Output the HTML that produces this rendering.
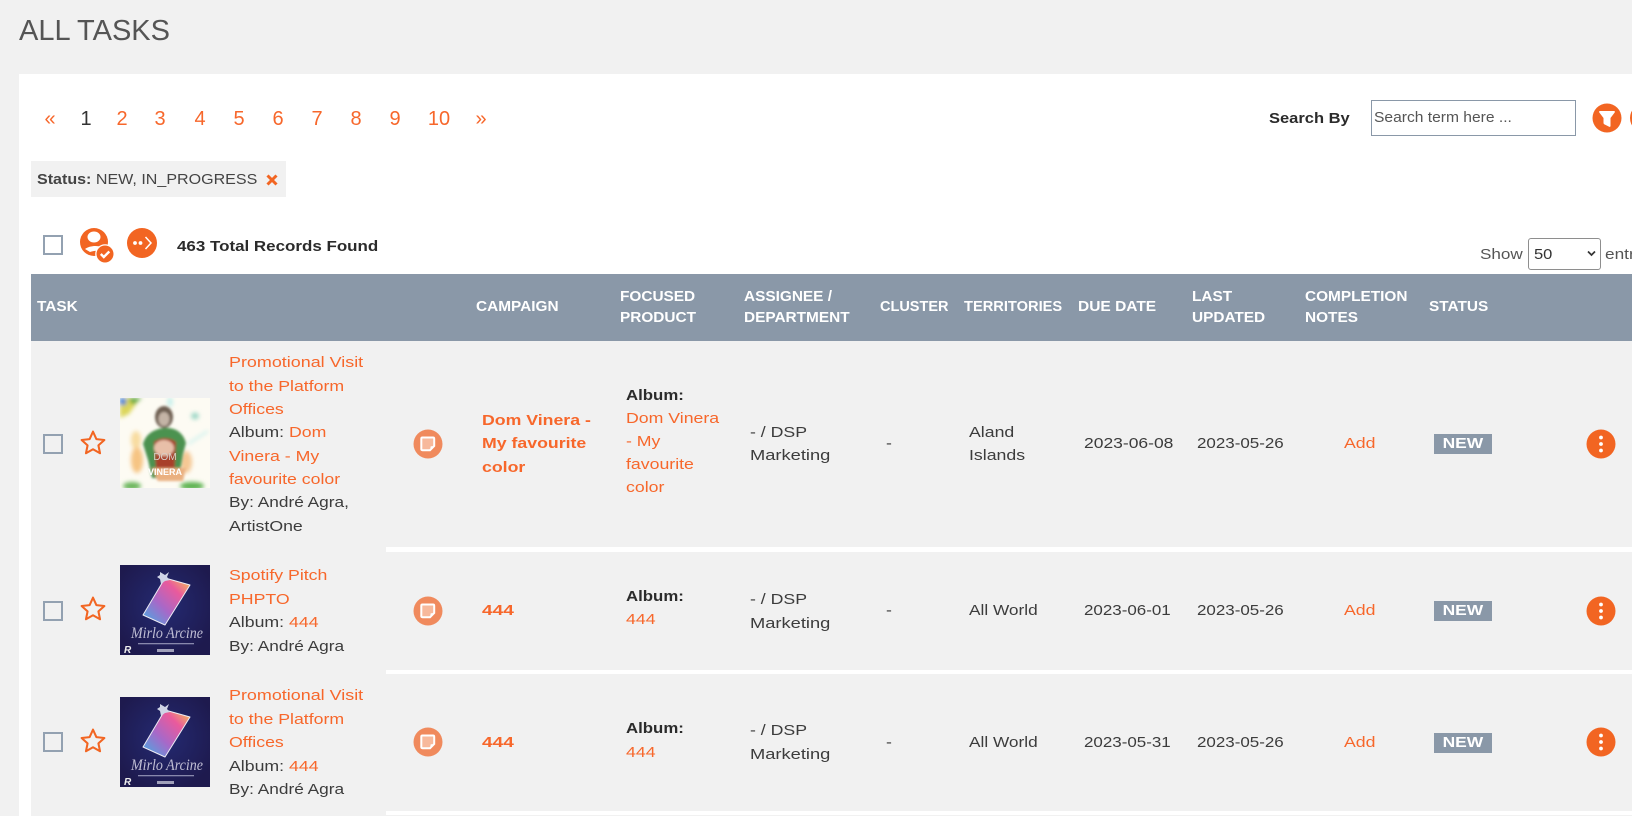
<!DOCTYPE html>
<html lang="en"><head><meta charset="utf-8"><title>All Tasks</title>
<style>
html,body{margin:0;padding:0;width:1632px;height:816px;overflow:hidden;background:#f1f1f1}
body{position:relative;font-family:"Liberation Sans",sans-serif;color:#3c3c3c}
.b{position:absolute}
.t{position:absolute;white-space:nowrap;height:20px;line-height:20px;font-size:15px;margin-top:1px;transform-origin:0 50%;transform:scaleX(1.18);color:#3c3c3c}
.o,.o a{color:#f7672b}
a{color:#f7672b;text-decoration:none}
.h{position:absolute;white-space:nowrap;height:20px;line-height:20px;font-size:14.5px;font-weight:bold;color:#fff;transform-origin:0 50%;transform:scaleX(1.06)}
.p{position:absolute;height:24px;line-height:24px;font-size:20px;width:40px;text-align:center;color:#f7672b;top:107px}
.bd{font-weight:bold}
.cb{position:absolute;width:16px;height:16px;border:2.5px solid #93a1b1;left:43px;background:transparent}
.new{position:absolute;left:1434px;width:58px;height:20px;background:#8a98a8;color:#fff;font-weight:bold;font-size:14.5px;line-height:20px;text-align:center}
.new span{display:inline-block;transform:scaleX(1.2)}
svg{position:absolute;display:block;overflow:visible}
</style></head><body>

<div class="t" style="left:19px;top:15px;height:30px;line-height:30px;font-size:29px;color:#555;transform:scaleX(1)">ALL TASKS</div>

<div class="b" style="left:19px;top:74px;width:1613px;height:742px;background:#fff"></div>

<!-- pagination -->
<div class="p" style="left:30px">«</div>
<div class="p" style="left:66px;color:#333">1</div>
<div class="p" style="left:102px">2</div>
<div class="p" style="left:140px">3</div>
<div class="p" style="left:180px">4</div>
<div class="p" style="left:219px">5</div>
<div class="p" style="left:258px">6</div>
<div class="p" style="left:297px">7</div>
<div class="p" style="left:336px">8</div>
<div class="p" style="left:375px">9</div>
<div class="p" style="left:419px">10</div>
<div class="p" style="left:461px">»</div>

<!-- search -->
<div class="t bd" style="left:1269px;top:108px;color:#2b2b2b;transform:scaleX(1.1)">Search By</div>
<div class="b" style="left:1371px;top:100px;width:203px;height:34px;border:1px solid #8a98a8;background:#fff"></div>
<div class="t" style="left:1374px;top:107px;color:#555;transform:scaleX(1.04)">Search term here ...</div>
<svg style="left:1592px;top:103px" width="30" height="30" viewBox="0 0 30 30"><circle cx="15" cy="15" r="14.500" fill="#f26522"/><path d="M8 8h14c.8 0 1.200.9.700 1.500L18.500 15v8c0 .7-.7 1.100-1.300.8l-4.500-2.300c-.7-.3-1.200-.9-1.200-1.600V15L7.300 9.500C6.800 8.900 7.200 8 8 8z" fill="#fff"/></svg>
<div class="b" style="left:1630px;top:103px;width:30px;height:30px;border-radius:50%;background:#f26522"></div>

<!-- chip -->
<div class="b" style="left:31px;top:161px;width:255px;height:36px;background:#f1f1f1"></div>
<div class="t" style="left:37px;top:168.500px;transform:scaleX(1.07);color:#444"><span class="bd">Status:</span> NEW, IN_PROGRESS</div>
<svg style="left:266px;top:174px" width="12" height="12" viewBox="0 0 12 12"><path d="M1.500 1.500L10.500 10.500M10.500 1.500L1.500 10.500" stroke="#f26522" stroke-width="3"/></svg>

<!-- toolbar -->
<div class="cb" style="top:235px"></div>
<svg style="left:79px;top:227px" width="38" height="38" viewBox="0 0 38 38">
<circle cx="15" cy="15" r="14" fill="#f26522"/>
<ellipse cx="15" cy="10" rx="6.500" ry="5.500" fill="#fff"/>
<path d="M6 22c4-3 11-4 17-2l-3 4c-3-.5-6 0-9 1z" fill="#fff"/>
<circle cx="26" cy="27" r="9.800" fill="#fff"/><circle cx="26" cy="27" r="8.500" fill="#f26522"/>
<path d="M21.800 27l3 3 5.500-5.500" fill="none" stroke="#fff" stroke-width="2.400"/>
</svg>
<svg style="left:127px;top:228px" width="30" height="30" viewBox="0 0 30 30"><circle cx="15" cy="15" r="15" fill="#f26522"/><circle cx="8" cy="15" r="1.900" fill="#fff"/><circle cx="13.500" cy="15" r="1.900" fill="#fff"/><path d="M18.500 9l5.500 6-5.500 6" fill="none" stroke="#fff" stroke-width="1.500"/></svg>
<div class="t bd" style="left:177px;top:236px;color:#2b2b2b;transform:scaleX(1.13)">463 Total Records Found</div>

<div class="t" style="left:1480px;top:244px;transform:scaleX(1.14);color:#555">Show</div>
<div class="b" style="left:1528px;top:238px;width:71px;height:30px;border:1px solid #8e8e8e;border-radius:3px;background:#fff"></div>
<div class="t" style="left:1534px;top:244px;color:#333;transform:scaleX(1.1)">50</div>
<svg style="left:1587px;top:250px" width="9" height="7" viewBox="0 0 9 7"><path d="M1 1.500l3.500 3.500L8 1.500" fill="none" stroke="#333" stroke-width="1.700"/></svg>
<div class="t" style="left:1605px;top:244px;color:#555;transform:scaleX(1.15)">entries</div>

<!-- table head -->
<div class="b" style="left:31px;top:274px;width:1601px;height:67px;background:#8a98a8"></div>
<div class="h" style="left:37px;top:297px">TASK</div>
<div class="h" style="left:476px;top:297px">CAMPAIGN</div>
<div class="h" style="left:620px;top:286.500px">FOCUSED</div>
<div class="h" style="left:620px;top:307.500px">PRODUCT</div>
<div class="h" style="left:744px;top:286.500px">ASSIGNEE /</div>
<div class="h" style="left:744px;top:307.500px">DEPARTMENT</div>
<div class="h" style="left:880px;top:297px;transform:scaleX(1)">CLUSTER</div>
<div class="h" style="left:964px;top:297px;transform:scaleX(1.01)">TERRITORIES</div>
<div class="h" style="left:1078px;top:297px;transform:scaleX(1.07)">DUE DATE</div>
<div class="h" style="left:1192px;top:286.500px">LAST</div>
<div class="h" style="left:1192px;top:307.500px">UPDATED</div>
<div class="h" style="left:1305px;top:286.500px">COMPLETION</div>
<div class="h" style="left:1305px;top:307.500px">NOTES</div>
<div class="h" style="left:1429px;top:297px">STATUS</div>

<!-- rows background -->
<div class="b" style="left:31px;top:341px;width:1601px;height:475px;background:#f1f1f1"></div>
<div class="b" style="left:386px;top:547px;width:1246px;height:4.500px;background:#fff"></div>
<div class="b" style="left:386px;top:669.500px;width:1246px;height:4.500px;background:#fff"></div>
<div class="b" style="left:386px;top:810.500px;width:1246px;height:4.500px;background:#fff"></div>

<!-- ROW 1 -->
<div class="cb" style="top:433.500px"></div>
<svg style="left:80px;top:430px" width="26" height="26" viewBox="1 1 24 24"><path d="M13 2.500l3.100 6.900 7.400.8-5.500 5 1.500 7.300-6.500-3.700-6.500 3.700 1.500-7.300-5.500-5 7.400-.8z" fill="none" stroke="#f26522" stroke-width="1.900" stroke-linejoin="round"/></svg>
<svg style="left:120px;top:398px" width="90" height="90" viewBox="0 0 90 90">
<defs><filter id="s1"><feGaussianBlur stdDeviation="2.200"/></filter><filter id="s2"><feGaussianBlur stdDeviation="1.300"/></filter><clipPath id="c1"><rect width="90" height="90"/></clipPath></defs>
<rect width="90" height="90" fill="#fdfbf3"/>
<g clip-path="url(#c1)">
<g filter="url(#s1)">
<path d="M0 0h20L9 16 0 20z" fill="#dcd65a"/><rect x="0" y="0" width="6" height="7" fill="#3a7ed8"/>
<path d="M8 0h14l-9 7z" fill="#5aa63c"/>
<ellipse cx="16" cy="42" rx="5" ry="9" fill="#f8dca0"/><ellipse cx="17" cy="62" rx="6" ry="13" fill="#f6c483"/>
<ellipse cx="50" cy="4" rx="3" ry="5" fill="#c8f0ec"/><ellipse cx="75" cy="18" rx="4" ry="3.500" fill="#9fd8c8"/><path d="M68 46L88 33" stroke="#d0f2ee" stroke-width="2.500"/>
<ellipse cx="12" cy="88" rx="9" ry="4" fill="#6ab65c"/><ellipse cx="72" cy="88" rx="12" ry="4" fill="#5cb250"/><ellipse cx="66" cy="64" rx="6" ry="11" fill="#f5c894"/>
</g>
<g filter="url(#s2)">
<path d="M23 46c3-11 12-15 21-16s19 3 22 15l-3 11-4 24H32l-4-18z" fill="#4c9250"/>
<path d="M34 44c6-5 16-5 22 0l-2 38H37z" fill="#a8412c"/>
<ellipse cx="44" cy="50" rx="10" ry="8" fill="#e8bfa8"/>
<ellipse cx="44" cy="19" rx="9" ry="11" fill="#6f6152"/>
<ellipse cx="44" cy="21" rx="5.500" ry="7" fill="#c4b4a6"/>
<path d="M32 70h34l-3 13H38z" fill="#eab080"/>
</g>
<text x="45" y="62" font-family="Liberation Sans,sans-serif" font-size="10" fill="#d8cfc8" text-anchor="middle">DOM</text>
<text x="45" y="77" font-family="Liberation Sans,sans-serif" font-size="9" font-weight="bold" fill="#fff" text-anchor="middle">VINERA</text>
</g></svg>
<div class="t o" style="left:229px;top:352px;transform:scaleX(1.195)">Promotional Visit</div>
<div class="t o" style="left:229px;top:376px">to the Platform</div>
<div class="t o" style="left:229px;top:399px">Offices</div>
<div class="t" style="left:229px;top:422px">Album: <a>Dom</a></div>
<div class="t o" style="left:229px;top:446px">Vinera - My</div>
<div class="t o" style="left:229px;top:469px">favourite color</div>
<div class="t" style="left:229px;top:492px;transform:scaleX(1.15)">By: André Agra,</div>
<div class="t" style="left:229px;top:516px">ArtistOne</div>
<svg style="left:413px;top:429px" width="30" height="30" viewBox="0 0 30 30"><circle cx="15" cy="15" r="14.500" fill="#f08a5d"/><path d="M9.500 8.500h10.500c.8 0 1.200.5 1.200 1.200V17l-4.200 4.200H9.500c-.7 0-1.200-.5-1.200-1.200V9.700c0-.7.500-1.200 1.200-1.200z" fill="#f7b99c" stroke="#fff" stroke-width="2"/><path d="M17.500 21.300V18c0-.5.300-.8.800-.8h3.200z" fill="#fff"/></svg>
<div class="t bd o" style="left:482px;top:409.500px">Dom Vinera -</div>
<div class="t bd o" style="left:482px;top:433px">My favourite</div>
<div class="t bd o" style="left:482px;top:457px">color</div>
<div class="t bd" style="left:626px;top:384.500px;color:#2b2b2b;transform:scaleX(1.12)">Album:</div>
<div class="t o" style="left:626px;top:407.500px">Dom Vinera</div>
<div class="t o" style="left:626px;top:431px">- My</div>
<div class="t o" style="left:626px;top:454px">favourite</div>
<div class="t o" style="left:626px;top:477px">color</div>
<div class="t" style="left:750px;top:422px">- / DSP</div>
<div class="t" style="left:750px;top:445px;transform:scaleX(1.22)">Marketing</div>
<div class="t" style="left:886px;top:433px">-</div>
<div class="t" style="left:969px;top:422px">Aland</div>
<div class="t" style="left:969px;top:445px">Islands</div>
<div class="t" style="left:1084px;top:433px;transform:scaleX(1.165)">2023-06-08</div>
<div class="t" style="left:1197px;top:433px;transform:scaleX(1.13)">2023-05-26</div>
<div class="t o" style="left:1344px;top:433px">Add</div>
<div class="new" style="top:434px"><span>NEW</span></div>
<svg style="left:1586px;top:429px" width="30" height="30" viewBox="0 0 30 30"><circle cx="15" cy="15" r="14.500" fill="#f26522"/><circle cx="15" cy="8.500" r="1.900" fill="#fff"/><circle cx="15" cy="15" r="1.900" fill="#fff"/><circle cx="15" cy="21.500" r="1.900" fill="#fff"/></svg>

<!-- ROW 2 -->
<div class="cb" style="top:600.500px"></div>
<svg style="left:80px;top:596px" width="26" height="26" viewBox="1 1 24 24"><path d="M13 2.500l3.100 6.900 7.400.8-5.500 5 1.500 7.300-6.500-3.700-6.500 3.700 1.500-7.300-5.500-5 7.400-.8z" fill="none" stroke="#f26522" stroke-width="1.900" stroke-linejoin="round"/></svg>
<svg style="left:120px;top:565px" width="90" height="90" viewBox="0 0 90 90">
<defs><radialGradient id="n1" cx="50%" cy="45%" r="60%"><stop offset="0" stop-color="#242a72"/><stop offset="1" stop-color="#1e1a4e"/></radialGradient><linearGradient id="p1" x1="0" y1="1" x2="1" y2="0"><stop offset="0" stop-color="#3fb0e4"/><stop offset=".4" stop-color="#a868c8"/><stop offset=".72" stop-color="#ea5a9c"/><stop offset="1" stop-color="#f4cc50"/></linearGradient></defs>
<rect width="90" height="90" fill="url(#n1)"/>
<path d="M45 13L70 20 45 60 23 50z" fill="url(#p1)" stroke="#eeecf4" stroke-width="1" stroke-linejoin="round"/>
<path d="M40 7l5 3 4-3-2 5 3 3-5 1-4 3-1-5-3-2 3-2z" fill="#cfd4e6"/>
<text x="47" y="73" font-family="Liberation Serif,serif" font-style="italic" font-size="16" fill="#dcdaea" opacity=".85" text-anchor="middle" textLength="72" lengthAdjust="spacingAndGlyphs">Mirlo Arcine</text>
<rect x="18" y="78" width="56" height="1.300" fill="#8888ac"/>
<rect x="37" y="84" width="17" height="3" fill="#a0a0ba"/>
<text x="4" y="88" font-family="Liberation Sans,sans-serif" font-weight="bold" font-style="italic" font-size="10" fill="#eee">R</text>
</svg>
<div class="t o" style="left:229px;top:565px">Spotify Pitch</div>
<div class="t o" style="left:229px;top:589px">PHPTO</div>
<div class="t" style="left:229px;top:612px">Album: <a>444</a></div>
<div class="t" style="left:229px;top:636px;transform:scaleX(1.15)">By: André Agra</div>
<svg style="left:413px;top:596px" width="30" height="30" viewBox="0 0 30 30"><circle cx="15" cy="15" r="14.500" fill="#f08a5d"/><path d="M9.500 8.500h10.500c.8 0 1.200.5 1.200 1.200V17l-4.200 4.200H9.500c-.7 0-1.200-.5-1.200-1.200V9.700c0-.7.500-1.200 1.200-1.200z" fill="#f7b99c" stroke="#fff" stroke-width="2"/><path d="M17.500 21.300V18c0-.5.300-.8.800-.8h3.200z" fill="#fff"/></svg>
<div class="t bd o" style="left:482px;top:600px;transform:scaleX(1.27)">444</div>
<div class="t bd" style="left:626px;top:586px;color:#2b2b2b;transform:scaleX(1.12)">Album:</div>
<div class="t o" style="left:626px;top:609px">444</div>
<div class="t" style="left:750px;top:588.500px">- / DSP</div>
<div class="t" style="left:750px;top:612.500px;transform:scaleX(1.22)">Marketing</div>
<div class="t" style="left:886px;top:600px">-</div>
<div class="t" style="left:969px;top:600px;transform:scaleX(1.15)">All World</div>
<div class="t" style="left:1084px;top:600px;transform:scaleX(1.13)">2023-06-01</div>
<div class="t" style="left:1197px;top:600px;transform:scaleX(1.13)">2023-05-26</div>
<div class="t o" style="left:1344px;top:600px">Add</div>
<div class="new" style="top:601px"><span>NEW</span></div>
<svg style="left:1586px;top:596px" width="30" height="30" viewBox="0 0 30 30"><circle cx="15" cy="15" r="14.500" fill="#f26522"/><circle cx="15" cy="8.500" r="1.900" fill="#fff"/><circle cx="15" cy="15" r="1.900" fill="#fff"/><circle cx="15" cy="21.500" r="1.900" fill="#fff"/></svg>

<!-- ROW 3 -->
<div class="cb" style="top:731.500px"></div>
<svg style="left:80px;top:728px" width="26" height="26" viewBox="1 1 24 24"><path d="M13 2.500l3.100 6.900 7.400.8-5.500 5 1.500 7.300-6.500-3.700-6.500 3.700 1.500-7.300-5.500-5 7.400-.8z" fill="none" stroke="#f26522" stroke-width="1.900" stroke-linejoin="round"/></svg>
<svg style="left:120px;top:697px" width="90" height="90" viewBox="0 0 90 90">
<defs><radialGradient id="n2" cx="50%" cy="45%" r="60%"><stop offset="0" stop-color="#242a72"/><stop offset="1" stop-color="#1e1a4e"/></radialGradient><linearGradient id="p2" x1="0" y1="1" x2="1" y2="0"><stop offset="0" stop-color="#3fb0e4"/><stop offset=".4" stop-color="#a868c8"/><stop offset=".72" stop-color="#ea5a9c"/><stop offset="1" stop-color="#f4cc50"/></linearGradient></defs>
<rect width="90" height="90" fill="url(#n2)"/>
<path d="M45 13L70 20 45 60 23 50z" fill="url(#p2)" stroke="#eeecf4" stroke-width="1" stroke-linejoin="round"/>
<path d="M40 7l5 3 4-3-2 5 3 3-5 1-4 3-1-5-3-2 3-2z" fill="#cfd4e6"/>
<text x="47" y="73" font-family="Liberation Serif,serif" font-style="italic" font-size="16" fill="#dcdaea" opacity=".85" text-anchor="middle" textLength="72" lengthAdjust="spacingAndGlyphs">Mirlo Arcine</text>
<rect x="18" y="78" width="56" height="1.300" fill="#8888ac"/>
<rect x="37" y="84" width="17" height="3" fill="#a0a0ba"/>
<text x="4" y="88" font-family="Liberation Sans,sans-serif" font-weight="bold" font-style="italic" font-size="10" fill="#eee">R</text>
</svg>
<div class="t o" style="left:229px;top:685px;transform:scaleX(1.195)">Promotional Visit</div>
<div class="t o" style="left:229px;top:709px">to the Platform</div>
<div class="t o" style="left:229px;top:732px">Offices</div>
<div class="t" style="left:229px;top:756px">Album: <a>444</a></div>
<div class="t" style="left:229px;top:779px;transform:scaleX(1.15)">By: André Agra</div>
<svg style="left:413px;top:727px" width="30" height="30" viewBox="0 0 30 30"><circle cx="15" cy="15" r="14.500" fill="#f08a5d"/><path d="M9.500 8.500h10.500c.8 0 1.200.5 1.200 1.200V17l-4.200 4.200H9.500c-.7 0-1.200-.5-1.200-1.200V9.700c0-.7.500-1.200 1.200-1.200z" fill="#f7b99c" stroke="#fff" stroke-width="2"/><path d="M17.500 21.300V18c0-.5.300-.8.800-.8h3.200z" fill="#fff"/></svg>
<div class="t bd o" style="left:482px;top:732px;transform:scaleX(1.27)">444</div>
<div class="t bd" style="left:626px;top:717.500px;color:#2b2b2b;transform:scaleX(1.12)">Album:</div>
<div class="t o" style="left:626px;top:741.500px">444</div>
<div class="t" style="left:750px;top:719.500px">- / DSP</div>
<div class="t" style="left:750px;top:743.500px;transform:scaleX(1.22)">Marketing</div>
<div class="t" style="left:886px;top:732px">-</div>
<div class="t" style="left:969px;top:732px;transform:scaleX(1.15)">All World</div>
<div class="t" style="left:1084px;top:732px;transform:scaleX(1.13)">2023-05-31</div>
<div class="t" style="left:1197px;top:732px;transform:scaleX(1.13)">2023-05-26</div>
<div class="t o" style="left:1344px;top:732px">Add</div>
<div class="new" style="top:733px"><span>NEW</span></div>
<svg style="left:1586px;top:727px" width="30" height="30" viewBox="0 0 30 30"><circle cx="15" cy="15" r="14.500" fill="#f26522"/><circle cx="15" cy="8.500" r="1.900" fill="#fff"/><circle cx="15" cy="15" r="1.900" fill="#fff"/><circle cx="15" cy="21.500" r="1.900" fill="#fff"/></svg>

</body></html>
